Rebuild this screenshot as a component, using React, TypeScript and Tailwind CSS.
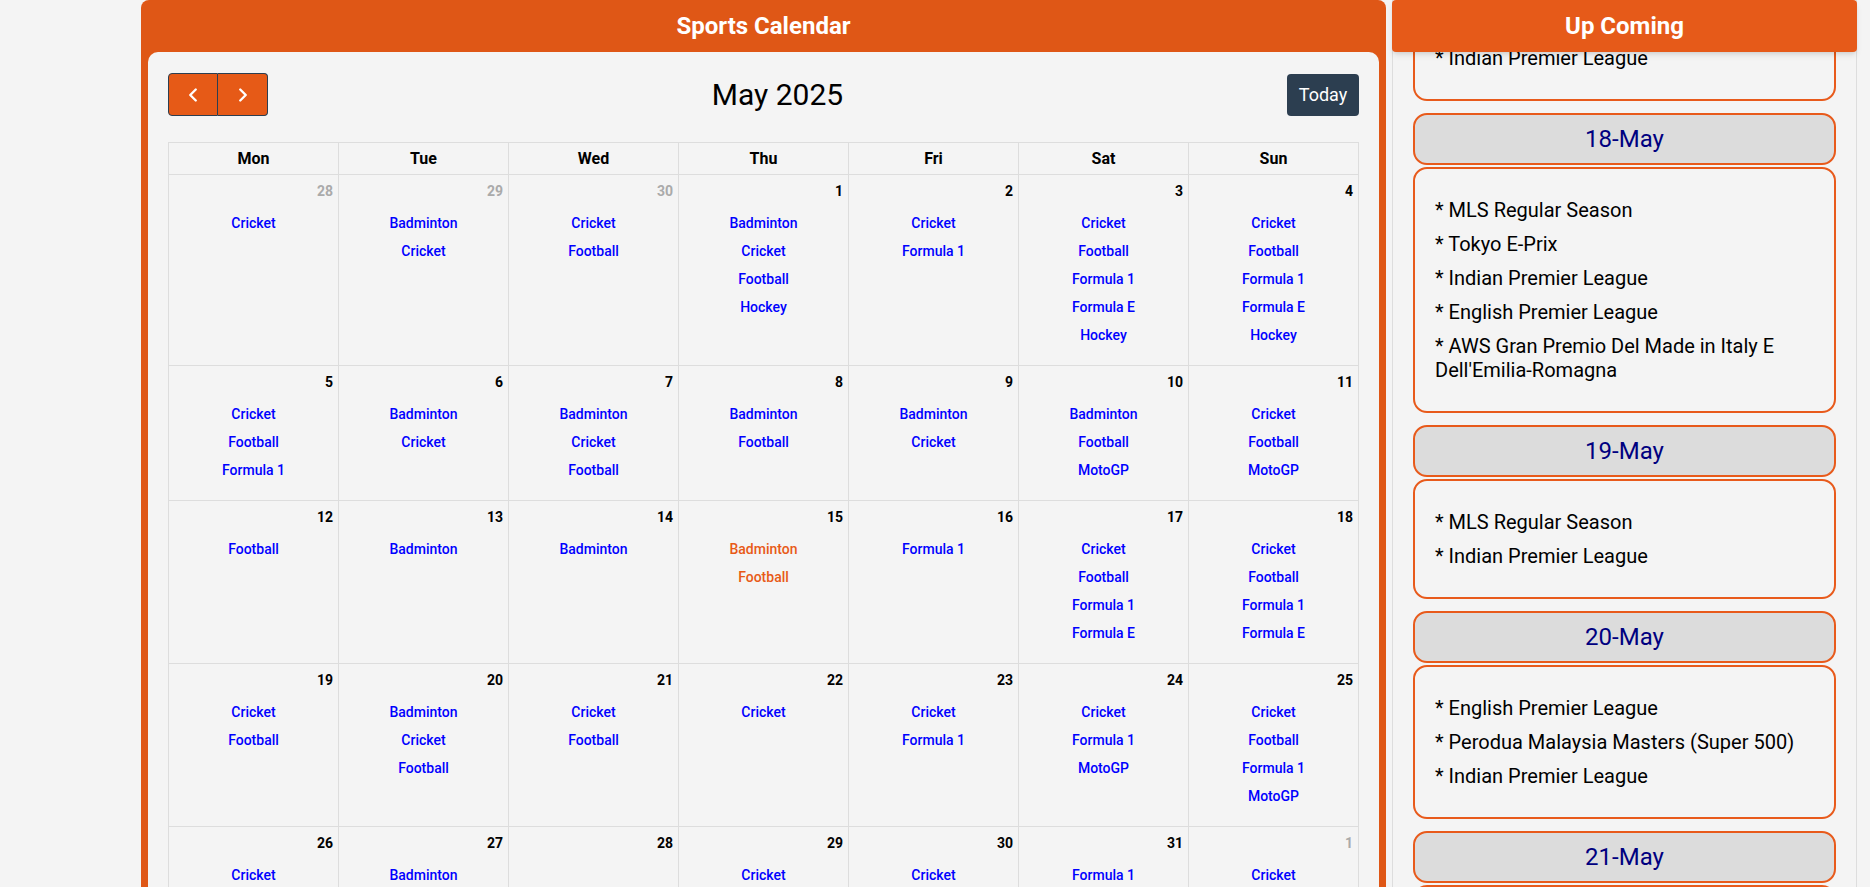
import { useLayoutEffect, useRef } from 'react';
import { ChevronLeft, ChevronRight } from 'lucide-react';

type Day = { d: number; muted?: boolean; events: string[] };

const TODAY = 15;

// calendar grid for May 2025 (Mon first)
const weeks: Day[][] = [
  [
    { d: 28, muted: true, events: ['Cricket'] },
    { d: 29, muted: true, events: ['Badminton', 'Cricket'] },
    { d: 30, muted: true, events: ['Cricket', 'Football'] },
    { d: 1, events: ['Badminton', 'Cricket', 'Football', 'Hockey'] },
    { d: 2, events: ['Cricket', 'Formula 1'] },
    { d: 3, events: ['Cricket', 'Football', 'Formula 1', 'Formula E', 'Hockey'] },
    { d: 4, events: ['Cricket', 'Football', 'Formula 1', 'Formula E', 'Hockey'] },
  ],
  [
    { d: 5, events: ['Cricket', 'Football', 'Formula 1'] },
    { d: 6, events: ['Badminton', 'Cricket'] },
    { d: 7, events: ['Badminton', 'Cricket', 'Football'] },
    { d: 8, events: ['Badminton', 'Football'] },
    { d: 9, events: ['Badminton', 'Cricket'] },
    { d: 10, events: ['Badminton', 'Football', 'MotoGP'] },
    { d: 11, events: ['Cricket', 'Football', 'MotoGP'] },
  ],
  [
    { d: 12, events: ['Football'] },
    { d: 13, events: ['Badminton'] },
    { d: 14, events: ['Badminton'] },
    { d: 15, events: ['Badminton', 'Football'] },
    { d: 16, events: ['Formula 1'] },
    { d: 17, events: ['Cricket', 'Football', 'Formula 1', 'Formula E'] },
    { d: 18, events: ['Cricket', 'Football', 'Formula 1', 'Formula E'] },
  ],
  [
    { d: 19, events: ['Cricket', 'Football'] },
    { d: 20, events: ['Badminton', 'Cricket', 'Football'] },
    { d: 21, events: ['Cricket', 'Football'] },
    { d: 22, events: ['Cricket'] },
    { d: 23, events: ['Cricket', 'Formula 1'] },
    { d: 24, events: ['Cricket', 'Formula 1', 'MotoGP'] },
    { d: 25, events: ['Cricket', 'Football', 'Formula 1', 'MotoGP'] },
  ],
  [
    { d: 26, events: ['Cricket', 'Football'] },
    { d: 27, events: ['Badminton', 'Cricket'] },
    { d: 28, events: [] },
    { d: 29, events: ['Cricket'] },
    { d: 30, events: ['Cricket', 'Football'] },
    { d: 31, events: ['Formula 1', 'Football'] },
    { d: 1, muted: true, events: ['Cricket', 'Formula 1'] },
  ],
];

const dayNames = ['Mon', 'Tue', 'Wed', 'Thu', 'Fri', 'Sat', 'Sun'];

const upcoming: { date: string; items: string[] }[] = [
  { date: '16-May', items: ['MLS Regular Season', 'Indian Premier League'] },
  { date: '17-May', items: ['English Premier League', 'Tokyo E-Prix', 'Indian Premier League'] },
  {
    date: '18-May',
    items: [
      'MLS Regular Season',
      'Tokyo E-Prix',
      'Indian Premier League',
      'English Premier League',
      "AWS Gran Premio Del Made in Italy E Dell'Emilia-Romagna",
    ],
  },
  { date: '19-May', items: ['MLS Regular Season', 'Indian Premier League'] },
  {
    date: '20-May',
    items: ['English Premier League', 'Perodua Malaysia Masters (Super 500)', 'Indian Premier League'],
  },
  { date: '21-May', items: ['Indian Premier League', 'English Premier League'] },
  { date: '22-May', items: ['Indian Premier League'] },
];

function DayCell({ day }: { day: Day }) {
  const isToday = !day.muted && day.d === TODAY;
  return (
    <div className="border-r border-b border-[#dddddd] pt-[6px]">
      <div
        className={`text-right pr-[5px] text-[14px] leading-[20px] font-bold ${
          day.muted ? 'text-[#aaaaaa]' : 'text-black'
        }`}
      >
        {day.d}
      </div>
      <div className="mt-[8px] pb-[16px]">
        {day.events.map(ev => (
          <div
            key={ev}
            className={`text-center text-[14px] leading-[28px] font-medium ${
              isToday ? 'text-[#e85a17]' : 'text-[#0000ff]'
            }`}
          >
            {ev}
          </div>
        ))}
      </div>
    </div>
  );
}

function Calendar() {
  return (
    <section className="w-[1245px] shrink-0 bg-[#df5716] rounded-t-[8px] px-[7px] flex flex-col">
      <h1 className="h-[52px] shrink-0 flex items-center justify-center text-white text-[24px] font-bold">
        Sports Calendar
      </h1>
      <div className="flex-1 bg-[#f4f4f4] rounded-t-[10px] px-[20px] pt-[21px]">
        {/* Toolbar */}
        <div className="flex items-center justify-between h-[43px] mb-[26px]">
          <div className="flex">
            <button className="w-[50px] h-[43px] bg-[#e65a17] border border-[#2c3e50] rounded-l-[4px] flex items-center justify-center text-white">
              <ChevronLeft size={22} strokeWidth={2.6} />
            </button>
            <button className="w-[50px] h-[43px] bg-[#e65a17] border-y border-r border-[#2c3e50] rounded-r-[4px] flex items-center justify-center text-white">
              <ChevronRight size={22} strokeWidth={2.6} />
            </button>
          </div>
          <h2 className="text-[30px] leading-none text-black">May 2025</h2>
          <button className="h-[42px] w-[72px] bg-[#2c3e50] rounded-[4px] text-white text-[18px]">Today</button>
        </div>

        {/* Grid */}
        <div className="grid grid-cols-7 border-l border-t border-[#dddddd]">
          {dayNames.map(n => (
            <div
              key={n}
              className="h-[32px] flex items-center justify-center border-r border-b border-[#dddddd] text-[16px] font-bold text-black"
            >
              {n}
            </div>
          ))}
          {weeks.flat().map((day, i) => (
            <DayCell key={i} day={day} />
          ))}
        </div>
      </div>
    </section>
  );
}

function Upcoming() {
  const scrollRef = useRef<HTMLDivElement>(null);
  const anchorRef = useRef<HTMLDivElement>(null);

  useLayoutEffect(() => {
    if (scrollRef.current && anchorRef.current) {
      scrollRef.current.scrollTop = anchorRef.current.offsetTop - 113;
    }
  }, []);

  return (
    <aside className="relative w-[465px] shrink-0 h-full">
      <div className="absolute top-0 inset-x-0 z-10 h-[52px] bg-[#e65a19] rounded-[4px] shadow-md flex items-center justify-center text-white text-[24px] font-bold">
        Up Coming
      </div>
      <div ref={scrollRef} className="relative h-full overflow-hidden border-x border-[#dddddd] px-[20px]">
        <div className="pt-[64px] pb-[40px]">
          {upcoming.map(day => (
            <div key={day.date} className="mb-[12px]">
              <div
                ref={day.date === '18-May' ? anchorRef : undefined}
                className="h-[52px] border-2 border-[#e85a1b] rounded-[14px] bg-[#dcdcdc] flex items-center justify-center text-[24px] text-[#000080]"
              >
                {day.date}
              </div>
              <ul className="mt-[2px] border-2 border-[#e85a1b] rounded-[14px] py-[29px] px-[20px] flex flex-col gap-[10px]">
                {day.items.map(it => (
                  <li key={it} className="text-[20px] leading-[24px] text-black">
                    * {it}
                  </li>
                ))}
              </ul>
            </div>
          ))}
        </div>
      </div>
    </aside>
  );
}

export default function App() {
  return (
    <div className="h-screen overflow-hidden bg-[#f4f4f4] font-['Roboto',sans-serif] flex gap-[6px] pl-[141px]">
      <Calendar />
      <Upcoming />
    </div>
  );
}
